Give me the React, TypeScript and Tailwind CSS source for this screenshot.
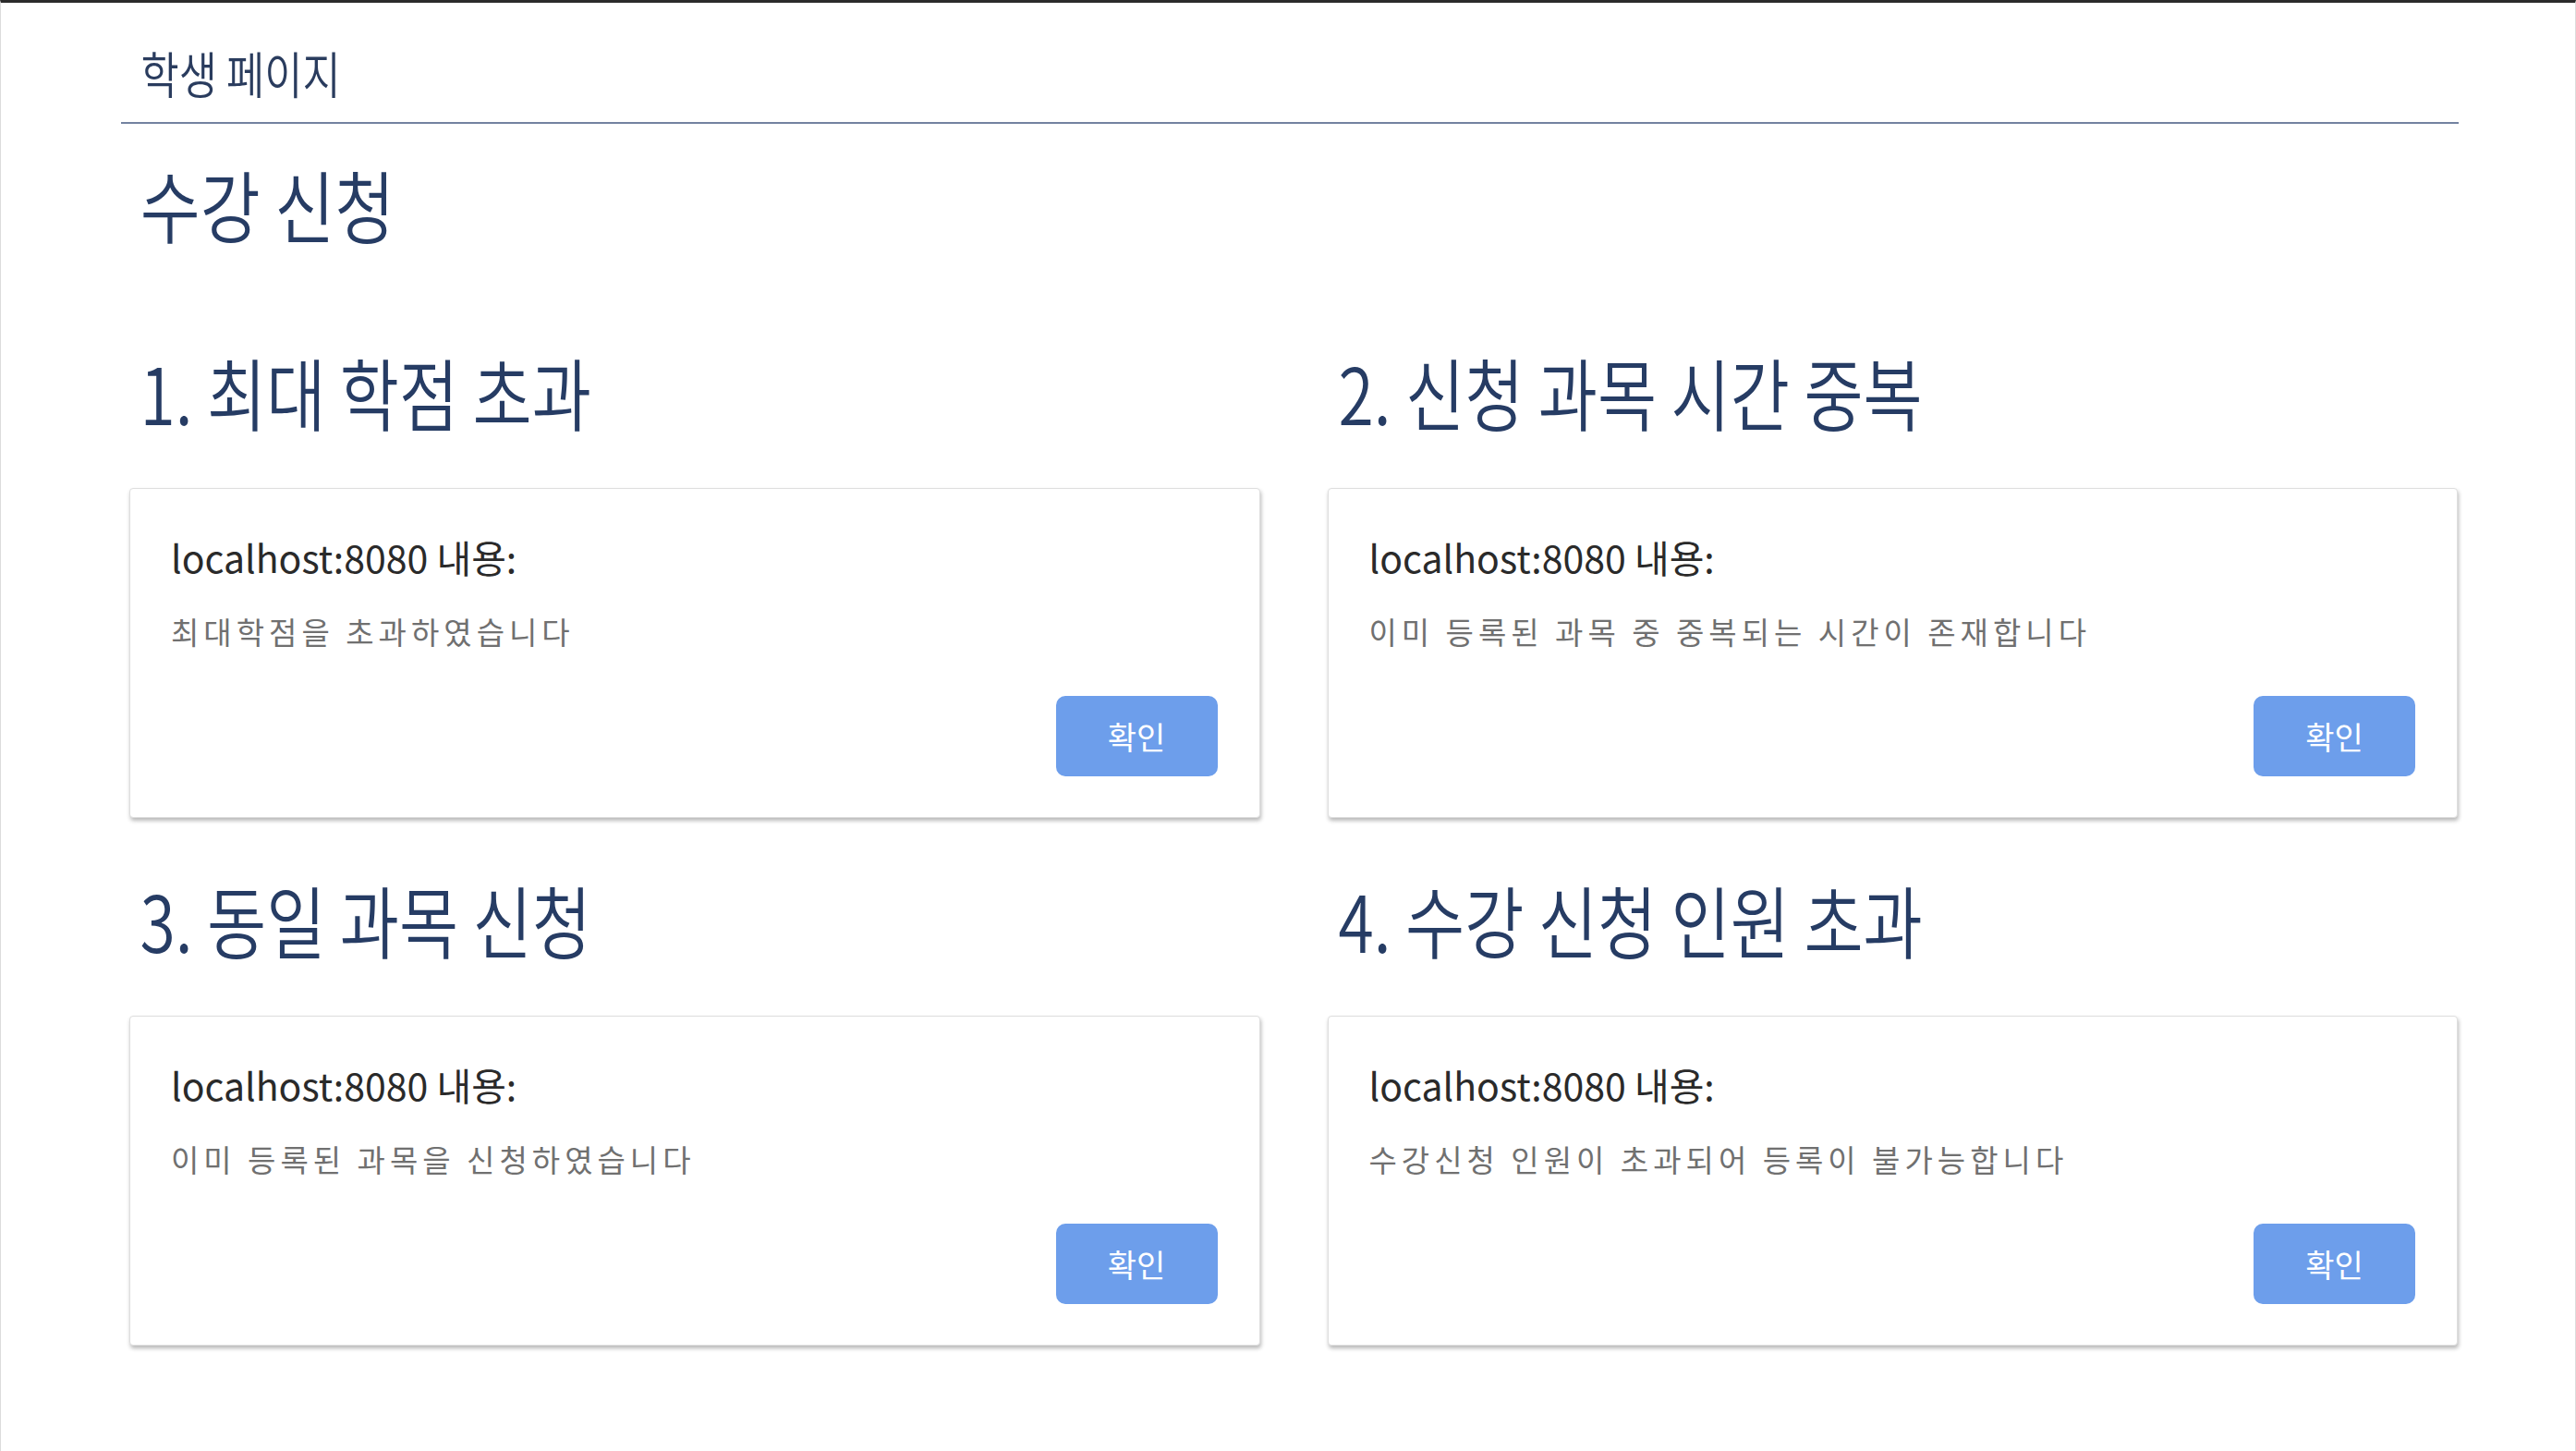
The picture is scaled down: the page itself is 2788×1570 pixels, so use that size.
const alerts = [
  { title: '1. 최대 학점 초과', message: '최대학점을 초과하였습니다' },
  { title: '2. 신청 과목 시간 중복', message: '이미 등록된 과목 중 중복되는 시간이 존재합니다' },
  { title: '3. 동일 과목 신청', message: '이미 등록된 과목을 신청하였습니다' },
  { title: '4. 수강 신청 인원 초과', message: '수강신청 인원이 초과되어 등록이 불가능합니다' },
]

const font = "font-['Noto_Sans_CJK_KR','Noto_Sans',sans-serif]"

function AlertCard({ title, message }: { title: string; message: string }) {
  return (
    <div>
      <h2 className="pl-[14px] text-[85px] leading-none font-[350] text-[#263c64] scale-x-[0.82] origin-left whitespace-nowrap">
        {title}
      </h2>
      <div className="mt-[63px] h-[357px] bg-white border border-[#dedede] rounded-[4px] shadow-[1px_3px_4px_rgba(0,0,0,0.28)] pt-[53px] pl-[44px] pr-[45px] flex flex-col">
        <p className="text-[41px] leading-none text-[#2a2a2a]">localhost:8080 내용:</p>
        <p className="mt-[44px] text-[33px] leading-none tracking-[5px] text-[#707070]">{message}</p>
        <div className="mt-[53px] flex justify-end">
          <button className="w-[175px] h-[87px] rounded-[10px] bg-[#6d9eeb] text-white text-[34px] leading-none flex items-center justify-center">
            확인
          </button>
        </div>
      </div>
    </div>
  )
}

export default function App() {
  return (
    <div className={`${font} w-[2788px] h-[1570px] bg-white border-t-[3px] border-t-[#2b2b2b] border-x border-x-[#dcdcdc] overflow-hidden`}>
      <div className="ml-[130px] w-[2530px]">
        {/* 헤더 */}
        <div className="mt-[49px] pl-[26px] text-[54px] leading-none font-[350] text-[#2a3c5e] scale-x-[0.83] origin-left whitespace-nowrap">
          학생 페이지
        </div>
        <div className="mt-[26px] h-[2px] bg-[#7382a0]" />

        <h1 className="mt-[43px] pl-[25px] text-[85px] leading-none font-[350] text-[#263c64] scale-x-[0.83] origin-left whitespace-nowrap">
          수강 신청
        </h1>

        <div className="mt-[118px] ml-[9px] w-[2520px] grid grid-cols-2 gap-x-[73px] gap-y-[66px]">
          {alerts.map(a => (
            <AlertCard key={a.title} title={a.title} message={a.message} />
          ))}
        </div>
      </div>
    </div>
  )
}
